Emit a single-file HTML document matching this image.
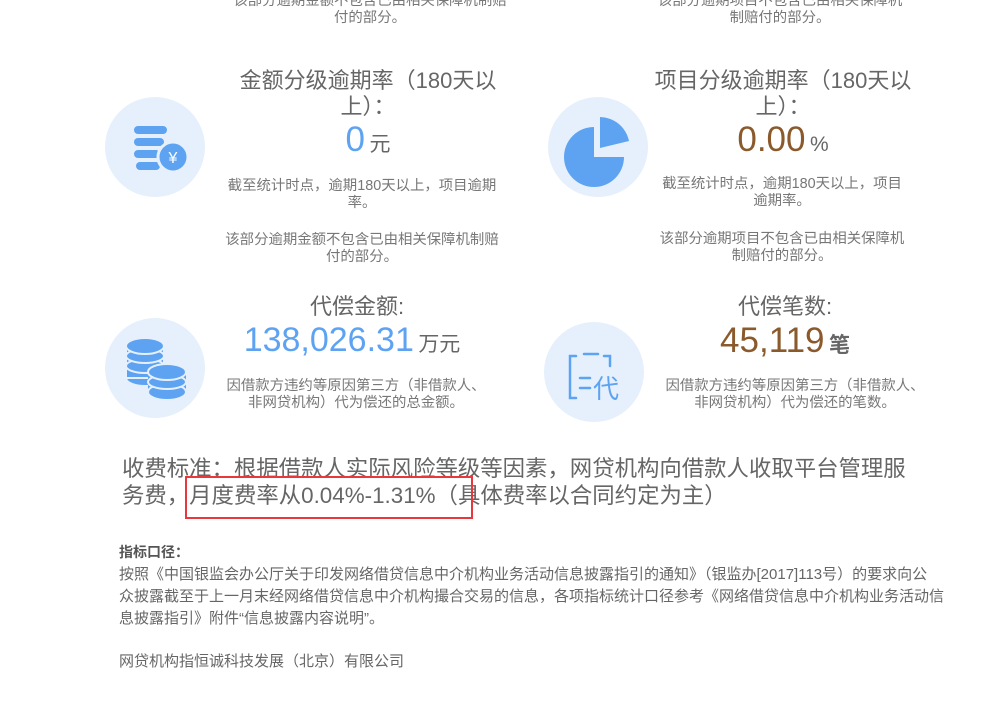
<!DOCTYPE html>
<html><head><meta charset="utf-8"><style>
body{margin:0;width:1000px;height:710px;background:#fff;overflow:hidden;position:relative;font-family:"Liberation Sans","Noto Sans CJK SC",sans-serif;color:#666}
.a{position:absolute;white-space:nowrap;text-align:center;transform:translateX(-50%)}
.d{font-size:14.4px;line-height:17px;color:#777}
.t{font-size:22px;line-height:26px;color:#666}
.circ{position:absolute;width:100px;height:100px;border-radius:50%;background:#e6f0fc}
.blue{color:#5ea3f2}.brown{color:#8a5a2c}
.big{font-size:35px}
.u{font-size:21px;color:#666}
</style></head><body>
<div class="a d" style="left:370px;top:-7px">该部分逾期金额不包含已由相关保障机制赔<br>付的部分。</div>
<div class="a d" style="left:780px;top:-7px">该部分逾期项目不包含已由相关保障机<br>制赔付的部分。</div>

<div class="circ" style="left:105px;top:97px"></div>
<svg style="position:absolute;left:105px;top:97px" width="100" height="100">
<g fill="#5ea3f2"><rect x="29" y="29" width="33" height="8" rx="4"/><rect x="29" y="41" width="30" height="8" rx="4"/><rect x="29" y="53" width="26" height="8" rx="4"/><rect x="31" y="65" width="24" height="8" rx="4"/><circle cx="68" cy="60" r="15" stroke="#e6f0fc" stroke-width="3"/></g>
<text x="68" y="66" font-size="16" fill="#fff" text-anchor="middle" font-family="Liberation Sans">¥</text>
</svg>
<div class="a t" style="left:368px;top:68px">金额分级逾期率（180天以<br>上）：</div>
<div class="a" style="left:368px;top:120px"><span class="big blue">0</span> <span class="u">元</span></div>
<div class="a d" style="left:362px;top:178px">截至统计时点，逾期180天以上，项目逾期<br>率。</div>
<div class="a d" style="left:362px;top:232px">该部分逾期金额不包含已由相关保障机制赔<br>付的部分。</div>

<div class="circ" style="left:548px;top:97px"></div>
<svg style="position:absolute;left:548px;top:97px" width="100" height="100">
<path d="M49 27 A30 30 0 1 0 79 57 L49 57 Z" fill="#5ea3f2" transform="translate(-3,3)"/>
<path d="M56 20 A30 30 0 0 1 85 44 L56 51 Z" fill="#5ea3f2" transform="translate(-4,0)"/>
</svg>
<div class="a t" style="left:783px;top:68px">项目分级逾期率（180天以<br>上）：</div>
<div class="a" style="left:783px;top:120px"><span class="big brown">0.00</span> <span class="u">%</span></div>
<div class="a d" style="left:782px;top:176px">截至统计时点，逾期180天以上，项目<br>逾期率。</div>
<div class="a d" style="left:782px;top:231px">该部分逾期项目不包含已由相关保障机<br>制赔付的部分。</div>

<div class="circ" style="left:105px;top:318px"></div>
<svg style="position:absolute;left:105px;top:318px" width="100" height="100">
<g fill="#5ea3f2" stroke="#e6f0fc" stroke-width="2"><ellipse cx="40" cy="60" rx="19" ry="8"/><rect x="21" y="28" width="38" height="32"/><ellipse cx="40" cy="48" rx="19" ry="7"/><ellipse cx="40" cy="38" rx="19" ry="7"/><ellipse cx="40" cy="28" rx="19" ry="8"/>
<rect x="43" y="54" width="38" height="20" fill="#5ea3f2" stroke="none"/><ellipse cx="62" cy="74" rx="19" ry="8"/><ellipse cx="62" cy="64" rx="19" ry="7"/><ellipse cx="62" cy="54" rx="19" ry="8"/></g>
</svg>
<div class="a t" style="left:357px;top:294px">代偿金额:</div>
<div class="a" style="left:352px;top:321px"><span class="big blue" style="font-size:34px">138,026.31</span> <span class="u">万元</span></div>
<div class="a d" style="left:356px;top:378px">因借款方违约等原因第三方（非借款人、<br>非网贷机构）代为偿还的总金额。</div>

<div class="circ" style="left:544px;top:322px"></div>
<svg style="position:absolute;left:544px;top:322px" width="100" height="100" fill="none" stroke="#5ea3f2" stroke-width="2.5" stroke-linecap="round">
<path d="M32 34 L26 34 L26 76 L32 76"/><path d="M40 32 H54"/><path d="M60 34 H66 V44"/><path d="M36 56 H46"/><path d="M36 66 H46"/>
<text x="62" y="76" font-size="26" fill="#5ea3f2" stroke="none" text-anchor="middle" font-family="Noto Sans CJK SC">代</text>
</svg>
<div class="a t" style="left:785px;top:294px">代偿笔数:</div>
<div class="a" style="left:785px;top:321px"><span class="big brown">45,119</span> <span class="u" style="font-weight:bold">笔</span></div>
<div class="a d" style="left:795px;top:378px">因借款方违约等原因第三方（非借款人、<br>非网贷机构）代为偿还的笔数。</div>

<div style="position:absolute;left:122px;top:455px;font-size:22.4px;line-height:27px;color:#666;white-space:nowrap">收费标准：根据借款人实际风险等级等因素，网贷机构向借款人收取平台管理服<br>务费，月度费率从0.04%-1.31%（具体费率以合同约定为主）</div>
<div style="position:absolute;left:185px;top:476px;width:284px;height:39px;border:2px solid #e8383d"></div>

<div style="position:absolute;left:119px;top:541px;font-size:15px;line-height:22px;color:#666;white-space:nowrap"><b style="color:#555;font-size:14px">指标口径：</b><br>按照《中国银监会办公厅关于印发网络借贷信息中介机构业务活动信息披露指引的通知》（银监办[2017]113号）的要求向公<br>众披露截至于上一月末经网络借贷信息中介机构撮合交易的信息，各项指标统计口径参考《网络借贷信息中介机构业务活动信<br>息披露指引》附件“信息披露内容说明”。</div>
<div style="position:absolute;left:119px;top:650px;font-size:15px;color:#666;white-space:nowrap">网贷机构指恒诚科技发展（北京）有限公司</div>
</body></html>
